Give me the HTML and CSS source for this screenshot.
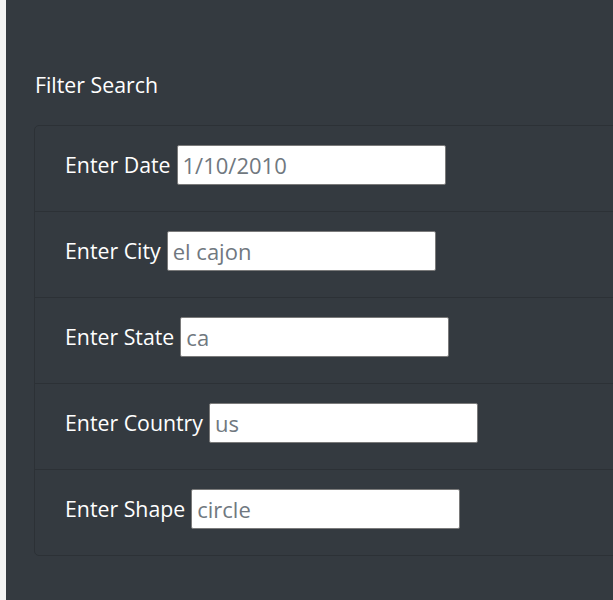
FILE: index.html
```html
<!DOCTYPE html>
<html>
<head>
<meta charset="utf-8">
<link rel="stylesheet" href="styles.css">
</head>
<body>
<div class="page">
  <h2 class="title">Filter Search</h2>
  <ul class="filters">
    <li class="filter"><label class="label" for="date">Enter Date</label><input class="field" id="date" type="text" value="1/10/2010"></li>
    <li class="filter"><label class="label" for="city">Enter City</label><input class="field" id="city" type="text" value="el cajon"></li>
    <li class="filter"><label class="label" for="state">Enter State</label><input class="field" id="state" type="text" value="ca"></li>
    <li class="filter"><label class="label" for="country">Enter Country</label><input class="field" id="country" type="text" value="us"></li>
    <li class="filter"><label class="label" for="shape">Enter Shape</label><input class="field" id="shape" type="text" value="circle"></li>
  </ul>
</div>
</body>
</html>
```
FILE: styles.css
```css
html, body {
  margin: 0;
  padding: 0;
  background: #f3f3f3;
}
body {
  font-family: "Open Sans", "Noto Sans", sans-serif;
  overflow: hidden;
}
.page {
  margin-left: 6px;
  height: 600px;
  background: #343a40;
  padding: 71px 0 0 28px;
  box-sizing: border-box;
  overflow: hidden;
}
.title {
  margin: 0 0 26px 1px;
  font-size: 21.3px;
  font-weight: 400;
  line-height: 28px;
  color: #ffffff;
}
.filters {
  list-style: none;
  margin: 0;
  padding: 0;
  width: 640px;
  border: 1px solid #2c3136;
  border-radius: 5px;
}
.filter {
  display: flex;
  align-items: center;
  gap: 6px;
  height: 85px;
  box-sizing: border-box;
  padding: 0 0 8px 30px;
  border-top: 1px solid #2c3136;
}
.filter:first-child {
  height: 85px;
  border-top: none;
}
.filter + .filter {
  height: 86px;
}
.label {
  font-size: 21.3px;
  color: #ffffff;
}
.field {
  width: 269px;
  height: 40px;
  box-sizing: border-box;
  border: 1px solid #7a7a7a;
  border-radius: 2px;
  padding: 0 5px;
  font-family: inherit;
  font-size: 22px;
  color: #707880;
  background: #ffffff;
  outline: none;
}
```
